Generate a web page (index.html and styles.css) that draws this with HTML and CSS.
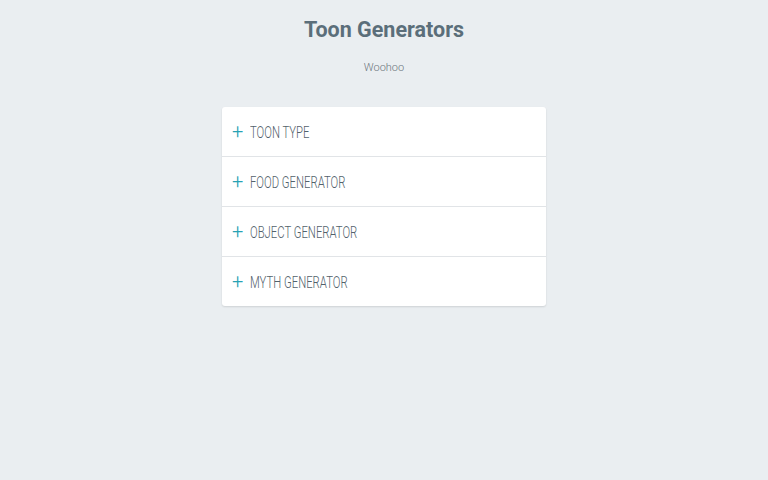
FILE: index.html
```html
<!DOCTYPE html>
<html>
<head>
<meta charset="utf-8">
<link rel="stylesheet" href="styles.css">
</head>
<body>
<div class="page">
  <h1 class="title">Toon Generators</h1>
  <p class="subtitle">Woohoo</p>
  <div class="card">
    <div class="row"><span class="plus">+</span><span class="label">TOON TYPE</span></div>
    <div class="row"><span class="plus">+</span><span class="label">FOOD GENERATOR</span></div>
    <div class="row"><span class="plus">+</span><span class="label">OBJECT GENERATOR</span></div>
    <div class="row"><span class="plus">+</span><span class="label">MYTH GENERATOR</span></div>
  </div>
</div>
</body>
</html>
```
FILE: styles.css
```css
html, body {
  margin: 0;
  padding: 0;
  background: #eaeef1;
  height: 100%;
}
.page {
  display: flex;
  flex-direction: column;
  align-items: center;
  padding-top: 17px;
}
.title {
  margin: 0;
  font-family: Roboto, "Liberation Sans", sans-serif;
  font-weight: 700;
  font-size: 21.5px;
  line-height: 26px;
  color: #5b6e7a;
}
.subtitle {
  margin: 18px 0 0 0;
  font-family: Roboto, "Liberation Sans", sans-serif;
  font-weight: 300;
  font-size: 11px;
  line-height: 13px;
  color: #6a757d;
}
.card {
  margin-top: 33px;
  width: 324px;
  background: #fff;
  border-radius: 3px;
  box-shadow: 0 1px 2px rgba(0,0,0,0.12);
  display: flex;
  flex-direction: column;
}
.row {
  height: 49px;
  display: flex;
  align-items: center;
  padding-left: 10px;
  border-bottom: 1px solid #e1e4e7;
}
.row:last-child {
  border-bottom: none;
}
.plus {
  flex: none;
  width: 18px;
  font-family: Roboto, "Liberation Sans", sans-serif;
  font-weight: 300;
  font-size: 20px;
  line-height: 20px;
  color: #28a2b4;
  margin-top: -2px;
}
.label {
  display: inline-block;
  font-family: Roboto, "Liberation Sans", sans-serif;
  font-weight: 300;
  font-size: 16.5px;
  line-height: 20px;
  color: #52616b;
  white-space: nowrap;
  transform: scaleX(0.685);
  transform-origin: left center;
  margin-top: 3px;
}
```
